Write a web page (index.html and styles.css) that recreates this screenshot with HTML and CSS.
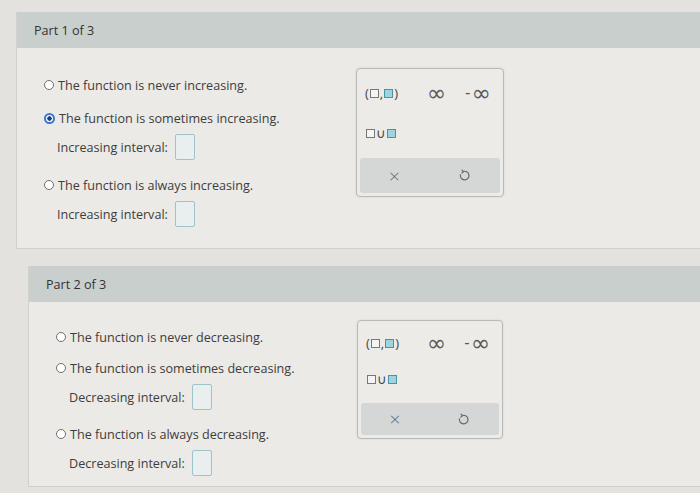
FILE: index.html
```html
<!DOCTYPE html>
<html lang="en">
<head>
    <meta charset="UTF-8">
    <title>Intervals of increase and decrease</title>
    <link rel="stylesheet" href="styles.css">
</head>
<body>
    <div class="part part-1">
        <div class="part-head">Part 1 of 3</div>
        <div class="part-body">
            <div class="choices">
                <div class="choice first">
                    <span class="radio"></span>The function is never increasing.
                </div>
                <div class="choice">
                    <span class="radio checked"></span>The function is sometimes increasing.
                </div>
                <div class="interval">Increasing interval: <span class="answer-box"></span></div>
                <div class="choice">
                    <span class="radio"></span>The function is always increasing.
                </div>
                <div class="interval">Increasing interval: <span class="answer-box"></span></div>
            </div>
            <div class="palette">
                <div class="palette-row">
                    <span class="key">(<i class="sq"></i>,<i class="sq filled"></i>)</span>
                    <span class="key inf">&infin;</span>
                    <span class="key inf neg"><b>-</b>&infin;</span>
                </div>
                <div class="palette-row">
                    <span class="key"><i class="sq"></i>&cup;<i class="sq filled"></i></span>
                </div>
                <div class="palette-bar">
                    <span class="clear">&times;</span>
                    <svg class="undo" viewBox="0 0 12 12" width="13" height="13">
                        <path d="M4.6 2.4 A4 4 0 1 1 2.3 5" fill="none" stroke="#666" stroke-width="1.1"/>
                        <path d="M3.4 0.8 L5 2.5 L3.3 4" fill="none" stroke="#666" stroke-width="1.1"/>
                    </svg>
                </div>
            </div>
        </div>
    </div>

    <div class="part part-2">
        <div class="part-head">Part 2 of 3</div>
        <div class="part-body">
            <div class="choices">
                <div class="choice first">
                    <span class="radio"></span>The function is never decreasing.
                </div>
                <div class="choice">
                    <span class="radio"></span>The function is sometimes decreasing.
                </div>
                <div class="interval">Decreasing interval: <span class="answer-box"></span></div>
                <div class="choice">
                    <span class="radio"></span>The function is always decreasing.
                </div>
                <div class="interval">Decreasing interval: <span class="answer-box"></span></div>
            </div>
            <div class="palette">
                <div class="palette-row">
                    <span class="key">(<i class="sq"></i>,<i class="sq filled"></i>)</span>
                    <span class="key inf">&infin;</span>
                    <span class="key inf neg"><b>-</b>&infin;</span>
                </div>
                <div class="palette-row">
                    <span class="key"><i class="sq"></i>&cup;<i class="sq filled"></i></span>
                </div>
                <div class="palette-bar">
                    <span class="clear">&times;</span>
                    <svg class="undo" viewBox="0 0 12 12" width="13" height="13">
                        <path d="M4.6 2.4 A4 4 0 1 1 2.3 5" fill="none" stroke="#666" stroke-width="1.1"/>
                        <path d="M3.4 0.8 L5 2.5 L3.3 4" fill="none" stroke="#666" stroke-width="1.1"/>
                    </svg>
                </div>
            </div>
        </div>
    </div>
</body>
</html>
```

FILE: styles.css
```css
body {
    margin: 0;
    padding-top: 12px;
    background: #e3e2de;
    color: #3d3d3d;
    font-family: 'Open Sans', 'Liberation Sans', sans-serif;
    font-size: 12.6px;
    height: 493px;
    overflow: hidden;
}
.part {
    background: #ebeae6;
    border-left: 1px solid #d2d1cd;
    border-bottom: 1px solid #cfcfcb;
}
.part-1 {
    margin-left: 16px;
    height: 236px;
}
.part-2 {
    margin-left: 28px;
    margin-top: 17px;
    height: 220px;
}
.part-head {
    background: #c8cfcd;
    height: 36px;
    line-height: 38px;
    padding-left: 17px;
    color: #333;
}
.part-body {
    display: grid;
    align-items: start;
}
.part-1 .part-body {
    grid-template-columns: 312px 148px;
    padding: 20px 0 0 27px;
}
.part-2 .part-body {
    grid-template-columns: 301px 146px;
    padding: 18px 0 0 27px;
}
.choices {
    display: flex;
    flex-direction: column;
    padding-top: 10px;
}
.choice {
    display: flex;
    align-items: center;
    height: 14px;
    margin-bottom: 9px;
}
.choice.first {
    margin-bottom: 19px;
}
.part-2 .choice.first {
    margin-bottom: 17px;
}
.radio {
    width: 8px;
    height: 8px;
    border: 1.5px solid #6f6f6f;
    border-radius: 50%;
    background: #fff;
    margin-right: 4px;
    flex-shrink: 0;
}
.radio.checked {
    border: 2px solid #3a75d4;
    width: 7px;
    height: 7px;
    background: radial-gradient(circle, #1f3d78 0 2px, #fff 2.4px);
}
.interval {
    display: flex;
    align-items: center;
    margin-left: 13px;
    height: 26px;
    margin-bottom: 18px;
}
.part-2 .interval {
    margin-bottom: 17px;
}
.answer-box {
    display: inline-block;
    width: 18px;
    height: 24px;
    margin-left: 7px;
    border: 1px solid #9ec3c9;
    border-radius: 2px;
    background: #e9efee;
}
.palette {
    height: 129px;
    background: #ecebe7;
    border: 1px solid #b9b9b6;
    border-radius: 4px;
    box-shadow: 0 0 3px rgba(0, 0, 0, 0.08);
    display: flex;
    flex-direction: column;
    padding: 3px;
    box-sizing: border-box;
}
.part-2 .palette {
    height: 119px;
}
.palette-row {
    display: flex;
    align-items: center;
    height: 38px;
    margin-top: 2px;
    padding-left: 5px;
}
.part-2 .palette-row {
    height: 34px;
}
.key {
    display: inline-flex;
    align-items: center;
    font-size: 13px;
    color: #444;
    width: 54px;
}
.key.inf {
    font-family: 'DejaVu Sans', sans-serif;
    font-size: 23px;
    line-height: 1;
    width: 40px;
    justify-content: center;
    color: #5a5a5a;
}
.key.neg {
    width: 46px;
}
.key.neg b {
    font-weight: normal;
    font-size: 15px;
    margin-right: 1px;
}
.sq {
    display: inline-block;
    width: 7px;
    height: 7px;
    border: 1px solid #777;
    background: #f4f4f4;
    margin: 0 1px;
}
.sq.filled {
    border-color: #4a93a5;
    background: #9ed3e0;
}
.palette-bar {
    margin-top: auto;
    height: 35px;
    background: #d5d7d6;
    border-radius: 3px;
    display: flex;
    align-items: center;
    justify-content: space-around;
}
.part-2 .palette-bar {
    height: 32px;
}
.clear {
    font-size: 19px;
    color: #666;
    font-weight: 300;
}
```
